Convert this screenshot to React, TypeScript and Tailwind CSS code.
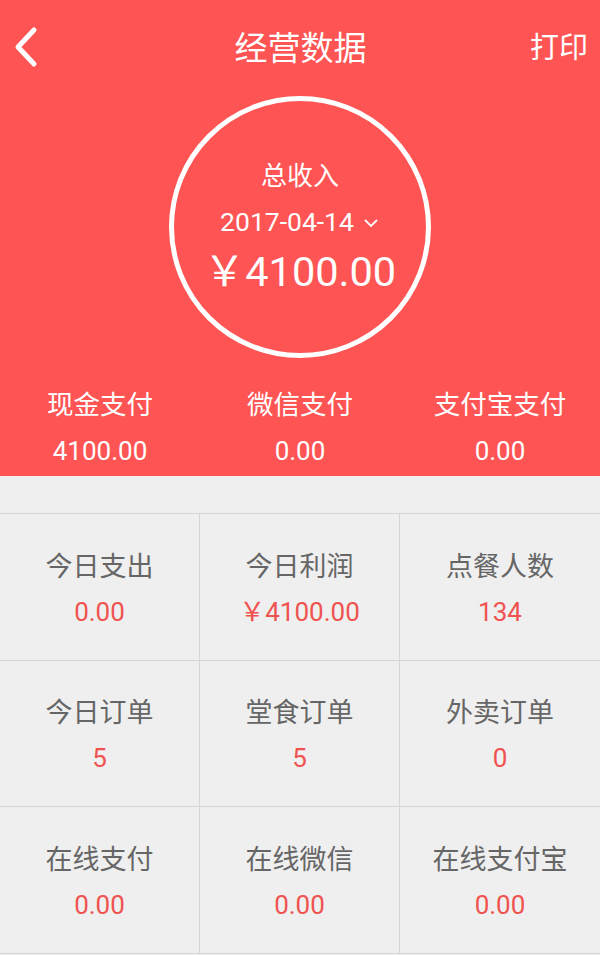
import React from "react";

const cjk = { fontFamily: "Roboto, 'Noto Sans CJK SC', sans-serif" };

type Cell = { label: string; value: string };

const payments: Cell[] = [
  { label: "现金支付", value: "4100.00" },
  { label: "微信支付", value: "0.00" },
  { label: "支付宝支付", value: "0.00" },
];

const stats: Cell[] = [
  { label: "今日支出", value: "0.00" },
  { label: "今日利润", value: "￥4100.00" },
  { label: "点餐人数", value: "134" },
  { label: "今日订单", value: "5" },
  { label: "堂食订单", value: "5" },
  { label: "外卖订单", value: "0" },
  { label: "在线支付", value: "0.00" },
  { label: "在线微信", value: "0.00" },
  { label: "在线支付宝", value: "0.00" },
];

export default function App() {
  return (
    <div className="w-[600px] h-[955px] bg-[#efefef] overflow-hidden" style={cjk}>
      {/* red header block */}
      <div className="bg-[#fe5454] text-white h-[476px] flex flex-col">
        <div className="h-[96px] flex items-center justify-between pl-[11px] pr-[12px]">
          <svg width="28" height="42" viewBox="0 0 28 42" className="-mt-[2px]">
            <path d="M23 4 L7 21 L23 38" fill="none" stroke="white" strokeWidth="5" strokeLinecap="round" strokeLinejoin="round" />
          </svg>
          <div className="text-[33px] leading-none pl-[32px]">经营数据</div>
          <div className="text-[29px] leading-none">打印</div>
        </div>

        <div className="mx-auto w-[262px] h-[262px] rounded-full border-[5px] border-white flex flex-col items-center pt-[62px]">
          <div className="text-[26px] leading-none">总收入</div>
          <div className="mt-[20px] flex items-center text-[26.5px] leading-none">
            <span>2017-04-14</span>
            <svg width="18" height="12" viewBox="0 0 18 12" className="ml-[8px] mt-[2px]">
              <path d="M3 3 L9 9 L15 3" fill="none" stroke="white" strokeWidth="1.8" />
            </svg>
          </div>
          <div className="mt-[15px] text-[41.5px] leading-none">￥4100.00</div>
        </div>

        <div className="grid grid-cols-3 mt-[34px]">
          {payments.map((p) => (
            <div key={p.label} className="flex flex-col items-center">
              <div className="text-[26.5px] leading-none">{p.label}</div>
              <div className="mt-[19px] text-[26px] leading-none">{p.value}</div>
            </div>
          ))}
        </div>
      </div>

      {/* stats grid */}
      <div className="mt-[37px] border-t border-[#d6d6d6] grid grid-cols-3">
        {stats.map((s, i) => (
          <div
            key={s.label}
            className={
              "h-[146.5px] pt-[5px] border-b border-[#d6d6d6] flex flex-col items-center justify-center " +
              (i % 3 !== 2 ? "border-r" : "")
            }
          >
            <div className="text-[27px] leading-none text-[#666666]">{s.label}</div>
            <div className="mt-[16px] text-[26px] leading-none text-[#ef5350] pt-[2px]">{s.value}</div>
          </div>
        ))}
      </div>
    </div>
  );
}
